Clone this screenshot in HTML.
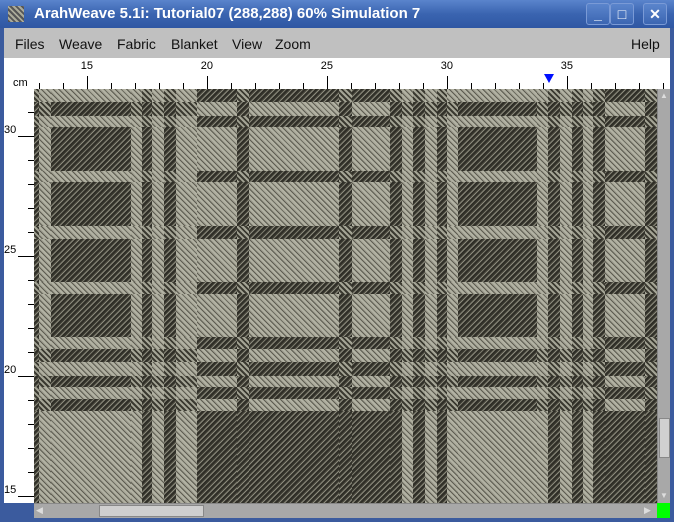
<!DOCTYPE html>
<html><head><meta charset="utf-8">
<style>
*{margin:0;padding:0;box-sizing:border-box}
body{width:674px;height:522px;overflow:hidden;background:#3b5b9e;font-family:"Liberation Sans",sans-serif;position:relative}
#title{position:absolute;left:0;top:0;width:674px;height:28px;background:linear-gradient(#5a84cc,#3a64b0 50%,#2f57a3);color:#fff;font-weight:bold;font-size:15px}
#title .t{position:absolute;left:34px;top:5px}
#title .ic{position:absolute;left:8px;top:6px;width:16px;height:16px;background:repeating-linear-gradient(45deg,#555 0 2px,#aa9 2px 4px)}
.bt{position:absolute;top:3px;width:24px;height:22px;border:1px solid #7a9ad6;border-radius:3px;background:linear-gradient(#5b85cc,#3c66b2);color:#fff;text-align:center;font-size:14px;line-height:20px}
#menu{position:absolute;left:4px;top:28px;width:666px;height:30px;background:#c0c0c0;font-size:14px;color:#111}
#menu span{position:absolute;top:8px}
#ruler{position:absolute;left:4px;top:58px;width:666px;height:31px;background:#fff}
#lruler{position:absolute;left:4px;top:89px;width:30px;height:414px;background:#fff}
.lab{position:absolute;font-size:11px;color:#000}
.tk{position:absolute;background:#000}
#fab{position:absolute;left:34px;top:89px;width:623px;height:414px;overflow:hidden;background:#6e6e62}
.c{position:absolute}
.D{background:repeating-linear-gradient(-45deg,#2f2e27 0 2px,#8a897b 2px 3px,#45443a 3px 4px)}
.L{background:repeating-linear-gradient(45deg,#b2b2a3 0 2px,#5e5d52 2px 3px,#a09f91 3px 4px)}
.M{background:repeating-linear-gradient(45deg,#a4a495 0 2px,#3b3a31 2px 4px)}
#vs{position:absolute;left:657px;top:89px;width:13px;height:414px;background:#a8a8a8;border-left:1px solid #888}
#hs{position:absolute;left:34px;top:503px;width:623px;height:15px;background:#a8a8a8;border-top:1px solid #888}
</style></head><body>
<div id="title"><div class="ic"></div><div class="t">ArahWeave 5.1i: Tutorial07 (288,288) 60% Simulation 7</div>
<div class="bt" style="left:586px">_</div><div class="bt" style="left:610px">□</div><div class="bt" style="left:643px">✕</div></div>
<div id="menu"><span style="left:11px">Files</span><span style="left:55px">Weave</span><span style="left:113px">Fabric</span><span style="left:167px">Blanket</span><span style="left:228px">View</span><span style="left:271px">Zoom</span><span style="left:627px">Help</span></div>
<div id="ruler"></div>
<div id="lruler"></div>
<div id="fab"></div>
<div id="vs"><div style="position:absolute;left:1px;top:329px;width:11px;height:40px;background:#d0d0d0;border:1px solid #888"></div>
<div style="position:absolute;left:2px;top:2px;color:#ddd;font-size:8px">▲</div><div style="position:absolute;left:2px;top:402px;color:#ddd;font-size:8px">▼</div></div>
<div id="hs"><div style="position:absolute;left:65px;top:1px;width:105px;height:12px;background:#cfcfcf;border:1px solid #888"></div>
<div style="position:absolute;left:2px;top:1px;color:#ddd;font-size:9px">◀</div><div style="position:absolute;left:610px;top:1px;color:#ddd;font-size:9px">▶</div></div>
<div style="position:absolute;left:657px;top:503px;width:13px;height:15px;background:#00ff00"></div>
<script>
var r=document.getElementById('ruler'),h='';
h+='<div class="lab" style="left:9px;top:19px">cm</div>';
for(var x=86.8-24*3;x<670;x+=24){var k=Math.round((x-86.8)/24);var maj=(k%5==0);var lx=x-4;
 if(lx>28&&lx<662){h+='<div class="tk" style="left:'+(lx)+'px;top:'+(maj?18:25)+'px;width:1px;height:'+(maj?13:6)+'px"></div>';
 if(maj)h+='<div class="lab" style="left:'+(lx-6)+'px;top:2px">'+(15+k)+'</div>';}}
h+='<div style="position:absolute;left:540px;top:16px;width:0;height:0;border-left:5px solid transparent;border-right:5px solid transparent;border-top:9px solid #0010ff"></div>';
r.innerHTML=h;
var l=document.getElementById('lruler');h='';
for(var y=136-24*2;y<503;y+=24){var k=Math.round((y-136)/24);var maj=(k%5==0);var ly=y-89;
 if(ly>0&&ly<414){h+='<div class="tk" style="top:'+ly+'px;left:'+(maj?14:24)+'px;height:1px;width:'+(maj?16:6)+'px"></div>';
 if(maj)h+='<div class="lab" style="left:0px;top:'+(ly-12)+'px">'+(30-k)+'</div>';}}
l.innerHTML=h;
var cols=[[34,'d'],[39,'l'],[51,'X'],[131,'l'],[142,'d'],[152,'l'],[164,'d'],[176,'l'],[197,'Y'],[237,'d'],[249,'Y'],[339,'d'],[352,'Y'],[390,'d'],[402,'l'],[413,'d'],[425,'l'],[437,'d'],[447,'l'],[458,'X'],[537,'l'],[548,'d'],[560,'l'],[572,'d'],[583,'l'],[593,'d'],[605,'Y'],[645,'d'],[657,'']];
var rows=[[89,'l'],[102,'d'],[116,'l'],[127,'T'],[171,'l'],[182,'T'],[226,'l'],[239,'T'],[282,'l'],[294,'T'],[337,'l'],[349,'d'],[362,'l'],[376,'d'],[387,'l'],[399,'d'],[411,'B'],[503,'']];
function inv(c){return c=='d'?'l':'d'}
h='';
for(var i=0;i<rows.length-1;i++)for(var j=0;j<cols.length-1;j++){
 var rt=rows[i][1],ct=cols[j][1],v;
 if(rt=='T'){v=ct=='X'?'d':ct=='Y'?'l':ct;}
 else if(rt=='B'){v=ct=='X'?'l':ct=='Y'?'d':ct;}
 else{ if(ct=='X')v=rt;else if(ct=='Y')v=inv(rt);else v=(ct==rt)?ct:'m';}
 var cls=v=='d'?'D':v=='l'?'L':'M';
 h+='<div class="c '+cls+'" style="left:'+(cols[j][0]-34)+'px;top:'+(rows[i][0]-89)+'px;width:'+(cols[j+1][0]-cols[j][0])+'px;height:'+(rows[i+1][0]-rows[i][0])+'px"></div>';}
document.getElementById('fab').innerHTML=h;
</script>
</body></html>
